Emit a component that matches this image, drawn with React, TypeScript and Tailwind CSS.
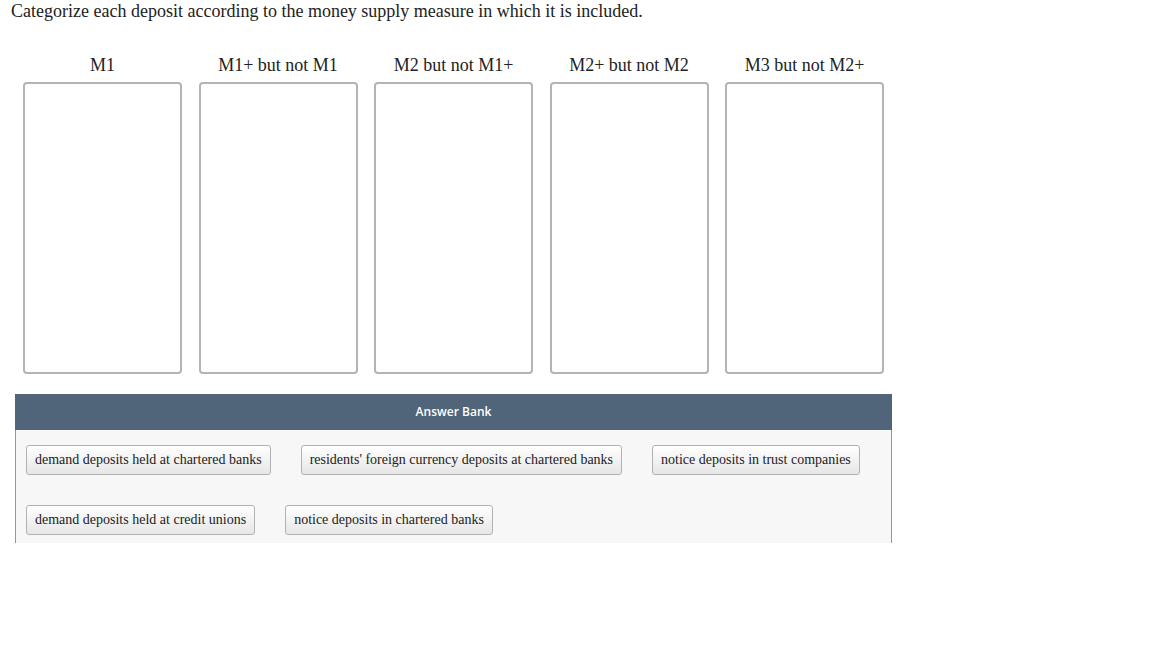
import React from "react";

const columns = ["M1", "M1+ but not M1", "M2 but not M1+", "M2+ but not M2", "M3 but not M2+"];

const answers = [
  "demand deposits held at chartered banks",
  "residents' foreign currency deposits at chartered banks",
  "notice deposits in trust companies",
  "demand deposits held at credit unions",
  "notice deposits in chartered banks",
];

const serif = { fontFamily: '"Liberation Serif", "Times New Roman", serif' };

export default function App() {
  return (
    <div className="min-h-screen bg-white text-[#222]" style={serif}>
      <p className="pl-[11px] text-[18px] leading-[22px]">
        Categorize each deposit according to the money supply measure in which it is included.
      </p>

      {/* drop columns */}
      <div className="mt-[31px] flex gap-[16.5px] pl-[23px]">
        {columns.map((c) => (
          <div key={c} className="flex w-[159px] flex-col items-center">
            <div className="h-[24px] text-center text-[18px] leading-[24px]">{c}</div>
            <div className="mt-[5px] h-[292px] w-full rounded-[4px] border-2 border-[#b4b4b4] bg-white" />
          </div>
        ))}
      </div>

      {/* answer bank */}
      <div className="ml-[15px] mt-[20px] w-[877px]">
        <div
          className="flex h-[36px] items-center justify-center bg-[#50647a] text-[12px] font-semibold text-white"
          style={{ fontFamily: '"Open Sans", "Liberation Sans", sans-serif' }}
        >
          Answer Bank
        </div>
        <div className="flex h-[113px] flex-wrap content-start gap-x-[30px] gap-y-[30px] border-x border-[#8b98a5] bg-[#f7f7f7] pl-[10px] pt-[15px]">
          {answers.map((a) => (
            <div
              key={a}
              className="flex h-[30px] items-center rounded-[3px] border border-[#b2b2b2] bg-gradient-to-b from-white to-[#e6e6e6] px-[8px] pb-[2px] text-[14px] text-[#222]"
            >
              {a}
            </div>
          ))}
        </div>
      </div>
    </div>
  );
}
